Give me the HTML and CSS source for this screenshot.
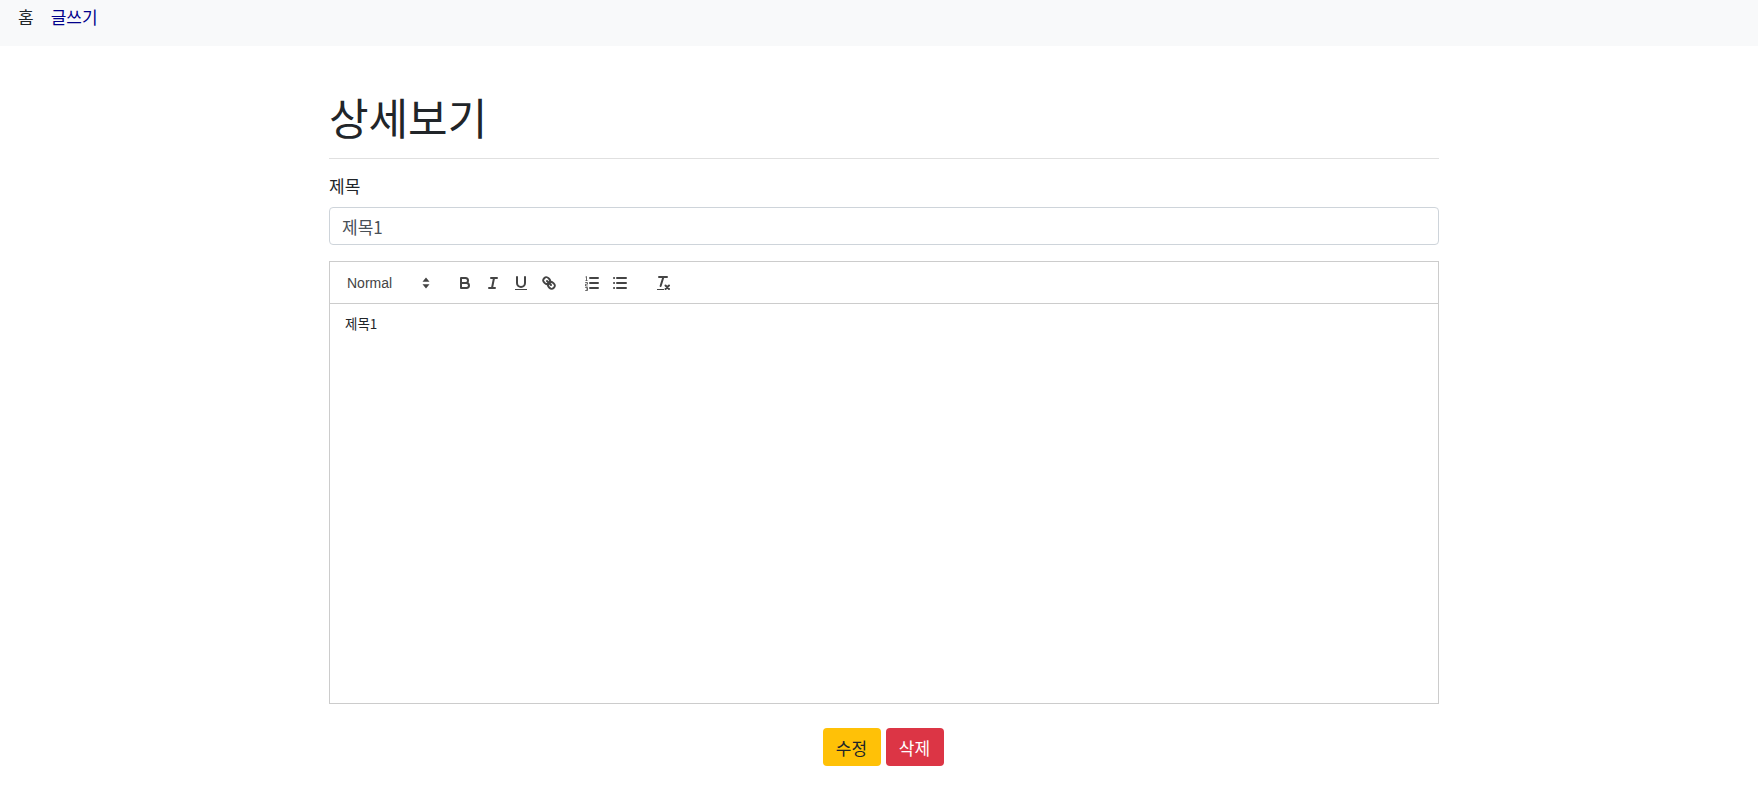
FILE: index.html
```html
<!doctype html>
<html lang="ko">
<head>
<meta charset="UTF-8">
<title>상세보기</title>
<link rel="stylesheet" href="styles.css">
</head>
<body>
	<nav class="topnav">
		<a class="nav_home" href="#">홈</a>
		<a class="nav_write" href="#">글쓰기</a>
	</nav>
	<div class="wrapper">
		<h1 class="title">상세보기</h1>
		<hr class="line">
		<label class="field_label" for="subject">제목</label>
		<input class="field_input" id="subject" type="text" value="제목1">
		<div class="editor">
			<div class="toolbar">
				<span class="picker">
					<span>Normal</span>
					<svg width="8" height="12" viewBox="0 0 8 12"><path d="M4 0.5L7.5 4.8H0.5Z M4 11.5L0.5 7.2H7.5Z" fill="#444"/></svg>
				</span>
				<span class="tool_group">
					<button class="tool" type="button"><svg width="18" height="18" viewBox="0 0 18 18"><path class="ic" d="M5 4H9.5A2.5 2.5 0 0 1 9.5 9H5Z"/><path class="ic" d="M5 9H10.5A2.5 2.5 0 0 1 10.5 14H5Z"/></svg></button>
					<button class="tool" type="button"><svg width="18" height="18" viewBox="0 0 18 18"><path class="ic" d="M7 4H13M5 14H11M8 14L10 4"/></svg></button>
					<button class="tool" type="button"><svg width="18" height="18" viewBox="0 0 18 18"><path class="ic" d="M5 3V9A4 4 0 0 0 13 9V3"/><rect class="ic_fill" x="3" y="15" width="12" height="1"/></svg></button>
					<button class="tool" type="button"><svg width="18" height="18" viewBox="0 0 18 18"><path class="ic" d="M7 7L11 11"/><path class="ic" d="M8.9 4.58A3.48 3.48 0 0 1 9.26 9.26A3.48 3.48 0 0 1 4.58 8.9C3.19 7.5 2.04 6.4 4.22 4.22S7.5 3.19 8.9 4.58Z"/><path class="ic" d="M13.42 9.1A3.48 3.48 0 0 0 8.74 8.74A3.48 3.48 0 0 0 9.1 13.42C10.5 14.81 11.6 15.96 13.78 13.78S14.81 10.5 13.42 9.1Z"/></svg></button>
				</span>
				<span class="tool_group">
					<button class="tool" type="button"><svg width="18" height="18" viewBox="0 0 18 18"><path class="ic" d="M7 4H15M7 9H15M7 14H15"/><path class="ic_thin" d="M2.5 3L3.5 2.5V6.5M2.5 6.5H4.5M2.2 8.5H4.5V10.2H2.5V12H4.7M2.2 13.5H4.5V16.5H2.2M3 15H4.5"/></svg></button>
					<button class="tool" type="button"><svg width="18" height="18" viewBox="0 0 18 18"><path class="ic" d="M6 4H15M6 9H15M6 14H15"/><path class="ic" d="M3 4H3.1M3 9H3.1M3 14H3.1"/></svg></button>
				</span>
				<span class="tool_group">
					<button class="tool" type="button"><svg width="18" height="18" viewBox="0 0 18 18"><path class="ic" d="M5 3H13M9.4 3L6.6 12"/><rect class="ic_fill" x="3" y="15" width="7" height="1"/><path class="ic" d="M11.5 11.5L15 15M15 11.5L11.5 15"/></svg></button>
				</span>
			</div>
			<div class="editor_body">제목1</div>
		</div>
		<div class="btn_area">
			<button class="btn btn_edit" type="button">수정</button>
			<button class="btn btn_del" type="button">삭제</button>
		</div>
	</div>
</body>
</html>
```

FILE: styles.css
```css
body{
	margin:0;
	background:#fff;
	color:#212529;
	font-family:"Noto Sans CJK KR","Liberation Sans",sans-serif;
	font-size:17px;
}
.topnav{
	height:46px;
	background:#f8f9fa;
	display:flex;
	padding-left:18px;
	gap:17px;
	box-sizing:border-box;
	line-height:33px;
}
.nav_home{
	color:#212529;
	text-decoration:none;
}
.nav_write{
	color:#00008b;
	text-decoration:none;
}
.wrapper{
	width:1110px;
	margin:0 auto;
	padding-left:10px;
}
.title{
	margin:42px 0 0;
	font-size:43px;
	font-weight:400;
	line-height:56px;
}
.line{
	margin:14px 0 0;
	border:0;
	border-top:1px solid #e0e0e0;
}
.field_label{
	display:block;
	margin-top:15px;
	line-height:24px;
}
.field_input{
	display:block;
	width:100%;
	height:38px;
	margin-top:9px;
	padding:0 12px;
	box-sizing:border-box;
	border:1px solid #ced4da;
	border-radius:4px;
	color:#495057;
	font-family:inherit;
	font-size:17px;
}
.editor{
	margin-top:16px;
	border:1px solid #ccc;
}
.toolbar{
	height:42px;
	box-sizing:border-box;
	border-bottom:1px solid #ccc;
	display:flex;
	align-items:center;
	padding-left:17px;
}
.picker{
	width:83px;
	padding-right:6px;
	display:flex;
	justify-content:space-between;
	align-items:center;
	font-family:"Liberation Sans",sans-serif;
	font-size:14px;
	color:#444;
}
.tool_group{
	display:flex;
	margin-left:15px;
}
.tool_group:first-of-type{
	margin-left:0;
}
.tool{
	width:28px;
	height:24px;
	padding:0;
	border:0;
	background:none;
	display:flex;
	align-items:center;
	justify-content:center;
}
.ic{
	fill:none;
	stroke:#444;
	stroke-width:2;
	stroke-linecap:round;
	stroke-linejoin:round;
}
.ic_thin{
	fill:none;
	stroke:#444;
	stroke-width:0.8;
}
.ic_fill{
	fill:#444;
}
.editor_body{
	height:399px;
	box-sizing:border-box;
	padding:9px 15px;
	font-size:13.5px;
	line-height:20px;
}
.btn_area{
	display:flex;
	justify-content:center;
	gap:5px;
	margin-top:24px;
	padding-right:2px;
}
.btn{
	width:58px;
	height:38px;
	padding:0;
	border:0;
	border-radius:4px;
	font-family:inherit;
	font-size:17px;
}
.btn_edit{
	background:#ffc107;
	color:#212529;
}
.btn_del{
	background:#dc3545;
	color:#fff;
}
```
